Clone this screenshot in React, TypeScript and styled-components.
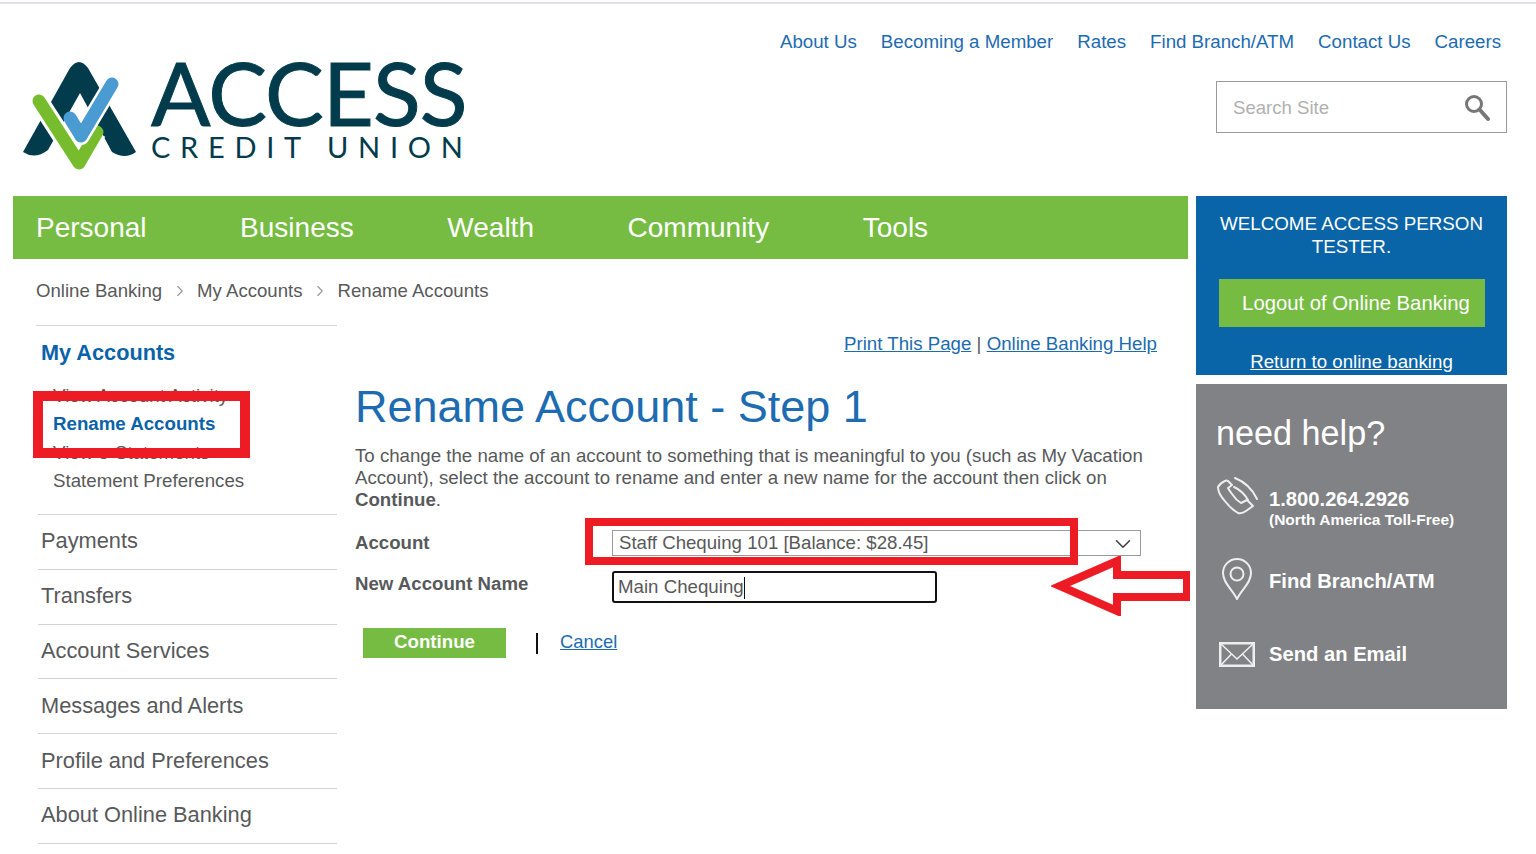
import styled, { createGlobalStyle } from "styled-components";
import { ChevronDown, ChevronRight } from "lucide-react";

const GlobalStyle = createGlobalStyle`
  html, body {
    margin: 0;
    padding: 0;
    background: #fff;
    font-family: "Liberation Sans", Arial, sans-serif;
    color: #58595b;
  }
  * { box-sizing: border-box; }
`;

const Page = styled.div`
  width: 1536px;
  height: 854px;
  overflow: hidden;
  padding-top: 2px;
`;

const TopRule = styled.div`
  height: 2px;
  background: #e0e0e8;
`;

const Header = styled.header`
  height: 192px;
  display: flex;
  justify-content: space-between;
  padding: 0 29px 0 22px;
`;

const Logo = styled.div`
  display: flex;
  gap: 13px;
  padding-top: 54px;
  align-items: flex-start;
`;

const LogoText = styled.div`
  color: #023c4c;
  font-family: Lato, sans-serif;
  margin-top: -6px;
`;

const LogoName = styled.div`
  font-size: 88px;
  line-height: 80px;
  letter-spacing: -0.8px;
  -webkit-text-stroke: 1px #023c4c;
`;

const LogoSub = styled.div`
  font-size: 29px;
  line-height: 30px;
  letter-spacing: 9.7px;
  white-space: nowrap;
`;

const HeaderRight = styled.div`
  display: flex;
  flex-direction: column;
  align-items: flex-end;
`;

const TopLinks = styled.nav`
  display: flex;
  gap: 24px;
  padding: 27px 6px 0 0;
  height: 77px;
`;

const TopLink = styled.a`
  color: #1d6bb0;
  font-size: 18.7px;
  line-height: 22px;
`;

const SearchBox = styled.div`
  width: 291px;
  height: 52px;
  border: 1px solid #9a9a9a;
  display: flex;
  align-items: center;
  justify-content: space-between;
  padding: 1px 16px 0 16px;
`;

const SearchInput = styled.input`
  border: 0;
  outline: 0;
  width: 200px;
  font: 18.6px "Liberation Sans", Arial, sans-serif;
  padding: 0;
  &::placeholder { color: #b0b0b0; opacity: 1; }
`;

const Body = styled.div`
  display: grid;
  grid-template-columns: 1175px 311px;
  column-gap: 8px;
  padding-left: 13px;
`;

const MainNav = styled.nav`
  height: 63px;
  background: #76bc43;
  display: flex;
  align-items: center;
  gap: 93.6px;
  padding: 1px 0 0 23px;
`;

const MainNavItem = styled.a`
  color: #fff;
  font-size: 28px;
`;

const Breadcrumb = styled.div`
  height: 66px;
  display: flex;
  align-items: center;
  padding: 0 0 3px 23px;
  font-size: 18.6px;
  color: #58595b;
  svg { margin: 0 8.5px; color: #999; }
`;

const Columns = styled.div`
  display: flex;
  padding-left: 23px;
`;

const Sidebar = styled.aside`
  width: 301px;
  position: relative;
  border-top: 1px solid #d4d4d4;
`;

const SideGroup = styled.div`
  height: 189px;
  margin-left: 2px;
  padding: 15px 0 0 3px;
  border-bottom: 1px solid #d4d4d4;
`;

const SideTitle = styled.div`
  color: #0a62a9;
  font-size: 21.7px;
  font-weight: bold;
  line-height: 24px;
  margin-bottom: 17px;
`;

const SubItem = styled.div<{ $active?: boolean }>`
  padding-left: 12px;
  font-size: 18.7px;
  line-height: 28.4px;
  color: ${(p) => (p.$active ? "#0a62a9" : "#58595b")};
  font-weight: ${(p) => (p.$active ? "bold" : "normal")};
`;

const SideRow = styled.div`
  height: 54.8px;
  display: flex;
  align-items: center;
  margin-left: 2px;
  padding: 0 0 1px 3px;
  font-size: 21.8px;
  color: #58595b;
  border-bottom: 1px solid #d4d4d4;
`;

const RedBox = styled.div`
  position: absolute;
  left: -3px;
  top: 65px;
  width: 217px;
  height: 67px;
  border: 10px solid #ed1c24;
`;

const Main = styled.main`
  flex: 1;
  padding: 8px 31px 0 18px;
`;

const HelpLinks = styled.div`
  text-align: right;
  font-size: 18.7px;
  line-height: 22px;
  a { color: #1d6bb0; text-decoration: underline; }
`;

const Title = styled.h1`
  margin: 24px 0 0;
  font-size: 45px;
  line-height: 56px;
  font-weight: normal;
  color: #1d6bb0;
`;

const Intro = styled.p`
  margin: 10px 0 0;
  font-size: 18.66px;
  line-height: 22px;
  color: #58595b;
  width: 800px;
`;

const Form = styled.div`
  position: relative;
  margin-top: 19px;
`;

const FormRow = styled.div<{ $gap?: number }>`
  display: grid;
  grid-template-columns: 257px 1fr;
  margin-top: ${(p) => p.$gap ?? 0}px;
`;

const Label = styled.label`
  font-size: 18.65px;
  font-weight: bold;
  line-height: 26px;
  color: #58595b;
`;

const SelectBox = styled.div`
  position: relative;
  width: 529px;
  height: 26px;
  border: 1px solid #9a9a9a;
  padding-left: 6px;
  font-size: 18.65px;
  line-height: 24px;
  color: #58595b;
  svg {
    position: absolute;
    right: 4px;
    top: 0;
    color: #444;
  }
`;

const NameInput = styled.div`
  width: 325px;
  height: 32px;
  border: 2px solid #111;
  border-radius: 3px;
  padding-left: 4px;
  font-size: 18.7px;
  line-height: 28px;
  color: #58595b;
  display: flex;
`;

const Caret = styled.span`
  width: 1px;
  height: 22px;
  margin: 4px 0 0 0;
  background: #111;
`;

const SelectHighlight = styled.div`
  position: absolute;
  left: 230px;
  top: -12px;
  width: 493px;
  height: 47px;
  border: 8px solid #ed1c24;
`;

const Arrow = styled.svg`
  position: absolute;
  left: 696px;
  top: 26px;
`;

const Actions = styled.div`
  display: flex;
  align-items: center;
  margin: 25px 0 0 8px;
`;

const ContinueButton = styled.button`
  width: 143px;
  height: 30px;
  border: 0;
  background: #76bc43;
  color: #fff;
  font: bold 18.7px "Liberation Sans", Arial, sans-serif;
  padding: 0 0 2px;
`;

const Separator = styled.span`
  width: 2px;
  height: 21px;
  background: #111;
  margin: 0 22px 0 30px;
`;

const CancelLink = styled.a`
  color: #1d6bb0;
  font-size: 18.4px;
  text-decoration: underline;
  margin-top: -3px;
`;

const Aside = styled.div`
  display: flex;
  flex-direction: column;
  gap: 9px;
`;

const WelcomePanel = styled.section`
  height: 179px;
  background: #0a64a8;
  color: #fff;
  text-align: center;
  padding-top: 16px;
  overflow: hidden;
`;

const WelcomeText = styled.div`
  font-size: 18.8px;
  line-height: 23px;
  padding: 0 10px;
`;

const LogoutButton = styled.button`
  display: block;
  width: 266px;
  height: 48px;
  margin: 21px 0 0 23px;
  border: 0;
  padding: 0 0 0 8px;
  background: #76bc43;
  color: #fff;
  font: 20.3px "Liberation Sans", Arial, sans-serif;
`;

const ReturnLink = styled.a`
  display: block;
  margin-top: 24px;
  font-size: 18.7px;
  line-height: 22px;
  color: #fff;
  text-decoration: underline;
`;

const HelpPanel = styled.section`
  height: 325px;
  background: #808285;
  color: #fff;
  padding: 28px 0 0 20px;
`;

const HelpTitle = styled.div`
  font-size: 34.2px;
  line-height: 42px;
  margin-bottom: 20px;
`;

const HelpRow = styled.div<{ $height: number }>`
  display: flex;
  height: ${(p) => p.$height}px;
  align-items: flex-start;
`;

const HelpIcon = styled.div<{ $top: number; $left: number }>`
  width: 53px;
  flex: none;
  display: flex;
  padding: ${(p) => p.$top}px 0 0 ${(p) => p.$left}px;
`;

const HelpBody = styled.div<{ $top: number }>`
  padding-top: ${(p) => p.$top}px;
`;

const HelpText = styled.div`
  font-size: 20.2px;
  font-weight: bold;
  line-height: 24px;
`;

const HelpNote = styled.div`
  font-size: 15.5px;
  font-weight: bold;
  line-height: 18px;
`;

function LogoMark() {
  return (
    <svg width="116" height="114" viewBox="22 58 116 114" fill="none">
      <path
        d="M23 152 L70 68 Q79 56 88 68 L136 152 Q125 160 112 152 L80 93 L48 150 Q35 160 23 152 Z"
        fill="#023c4c"
      />
      <path d="M39 101 L79 163 L97 132" stroke="#fff" strokeWidth="19" strokeLinejoin="round" />
      <path d="M39 101 L79 163 L97 132" stroke="#76bc2c" strokeWidth="13" strokeLinecap="round" strokeLinejoin="round" />
      <path d="M70 118 L81 136 L112 84" stroke="#fff" strokeWidth="18" strokeLinejoin="round" />
      <path d="M70 118 L81 136 L112 84" stroke="#4a9bd1" strokeWidth="13" strokeLinecap="round" strokeLinejoin="round" />
    </svg>
  );
}

function SearchIcon() {
  return (
    <svg width="26" height="28" viewBox="0 0 26 28" fill="none" stroke="#777">
      <circle cx="10" cy="10" r="7.5" strokeWidth="3" />
      <path d="M15.5 15.5 L24 25" strokeWidth="4" strokeLinecap="round" />
    </svg>
  );
}

function PhoneIcon() {
  return (
    <svg width="44" height="44" viewBox="6 6 44 44" fill="none" stroke="#eee" strokeWidth="2" strokeLinejoin="round" strokeLinecap="round">
      <path d="M15 11 Q10 13 8 17 Q8 23 14 30 Q21 39 28 43 Q32 44 36 41 L43 36 L37 30 L31 33 Q26 30 22 24 Q19 20 18 18 L22 15 L18 11 Q16 10 15 11 Z" />
      <path d="M25 8 Q40 14 47 29" />
      <path d="M24 17 Q33 21 38 30" />
    </svg>
  );
}

function PinIcon() {
  return (
    <svg width="32" height="44" viewBox="11 2 32 44" fill="none" stroke="#eee" strokeWidth="2">
      <path d="M27 44 C22 34 13 28 13 18 A14 14 0 0 1 41 18 C41 28 32 34 27 44 Z" strokeLinejoin="round" />
      <circle cx="27" cy="19" r="6.5" />
    </svg>
  );
}

function MailIcon() {
  return (
    <svg width="36" height="25" viewBox="0 0 36 25" fill="none" stroke="#eee">
      <rect x="1.25" y="1.25" width="33.5" height="22.5" strokeWidth="2.5" />
      <path d="M2 2 L18 17 L34 2 M2 23 L12.5 12 M34 23 L23.5 12" strokeWidth="1.6" />
    </svg>
  );
}

const sideRows = [
  "Payments",
  "Transfers",
  "Account Services",
  "Messages and Alerts",
  "Profile and Preferences",
  "About Online Banking",
];

export default function App() {
  return (
    <Page>
      <GlobalStyle />
      <TopRule />
      <Header>
        <Logo>
          <LogoMark />
          <LogoText>
            <LogoName>ACCESS</LogoName>
            <LogoSub>CREDIT UNION</LogoSub>
          </LogoText>
        </Logo>
        <HeaderRight>
          <TopLinks>
            <TopLink>About Us</TopLink>
            <TopLink>Becoming a Member</TopLink>
            <TopLink>Rates</TopLink>
            <TopLink>Find Branch/ATM</TopLink>
            <TopLink>Contact Us</TopLink>
            <TopLink>Careers</TopLink>
          </TopLinks>
          <SearchBox>
            <SearchInput placeholder="Search Site" />
            <SearchIcon />
          </SearchBox>
        </HeaderRight>
      </Header>
      <Body>
        <div>
          <MainNav>
            <MainNavItem>Personal</MainNavItem>
            <MainNavItem>Business</MainNavItem>
            <MainNavItem>Wealth</MainNavItem>
            <MainNavItem>Community</MainNavItem>
            <MainNavItem>Tools</MainNavItem>
          </MainNav>
          <Breadcrumb>
            Online Banking
            <ChevronRight size={18} strokeWidth={1.5} />
            My Accounts
            <ChevronRight size={18} strokeWidth={1.5} />
            Rename Accounts
          </Breadcrumb>
          <Columns>
            <Sidebar>
              <SideGroup>
                <SideTitle>My Accounts</SideTitle>
                <SubItem>View Account Activity</SubItem>
                <SubItem $active>Rename Accounts</SubItem>
                <SubItem>View e-Statements</SubItem>
                <SubItem>Statement Preferences</SubItem>
              </SideGroup>
              {sideRows.map((row) => (
                <SideRow key={row}>{row}</SideRow>
              ))}
              <RedBox />
            </Sidebar>
            <Main>
              <HelpLinks>
                <a>Print This Page</a> | <a>Online Banking Help</a>
              </HelpLinks>
              <Title>Rename Account - Step 1</Title>
              <Intro>
                To change the name of an account to something that is meaningful to you (such as My
                Vacation Account), select the account to rename and enter a new name for the account
                then click on <b>Continue</b>.
              </Intro>
              <Form>
                <FormRow>
                  <Label>Account</Label>
                  <SelectBox>
                    Staff Chequing 101 [Balance: $28.45]
                    <ChevronDown size={26} strokeWidth={1.5} />
                  </SelectBox>
                </FormRow>
                <FormRow $gap={15}>
                  <Label>New Account Name</Label>
                  <NameInput>
                    Main Chequing
                    <Caret />
                  </NameInput>
                </FormRow>
                <SelectHighlight />
                <Arrow width="139" height="60" viewBox="0 0 139 60" fill="none">
                  <path
                    d="M136 19 H66 V5 L9 30 L66 55 V41 H136 Z"
                    stroke="#ed1c24"
                    strokeWidth="8"
                  />
                </Arrow>
              </Form>
              <Actions>
                <ContinueButton>Continue</ContinueButton>
                <Separator />
                <CancelLink>Cancel</CancelLink>
              </Actions>
            </Main>
          </Columns>
        </div>
        <Aside>
          <WelcomePanel>
            <WelcomeText>WELCOME ACCESS PERSON TESTER.</WelcomeText>
            <LogoutButton>Logout of Online Banking</LogoutButton>
            <ReturnLink>Return to online banking</ReturnLink>
          </WelcomePanel>
          <HelpPanel>
            <HelpTitle>need help?</HelpTitle>
            <HelpRow $height={83}>
              <HelpIcon $top={2} $left={0}>
                <PhoneIcon />
              </HelpIcon>
              <HelpBody $top={13}>
                <HelpText>1.800.264.2926</HelpText>
                <HelpNote>(North America Toll-Free)</HelpNote>
              </HelpBody>
            </HelpRow>
            <HelpRow $height={72}>
              <HelpIcon $top={0} $left={5}>
                <PinIcon />
              </HelpIcon>
              <HelpBody $top={12}>
                <HelpText>Find Branch/ATM</HelpText>
              </HelpBody>
            </HelpRow>
            <HelpRow $height={40}>
              <HelpIcon $top={13} $left={3}>
                <MailIcon />
              </HelpIcon>
              <HelpBody $top={13}>
                <HelpText>Send an Email</HelpText>
              </HelpBody>
            </HelpRow>
          </HelpPanel>
        </Aside>
      </Body>
    </Page>
  );
}
